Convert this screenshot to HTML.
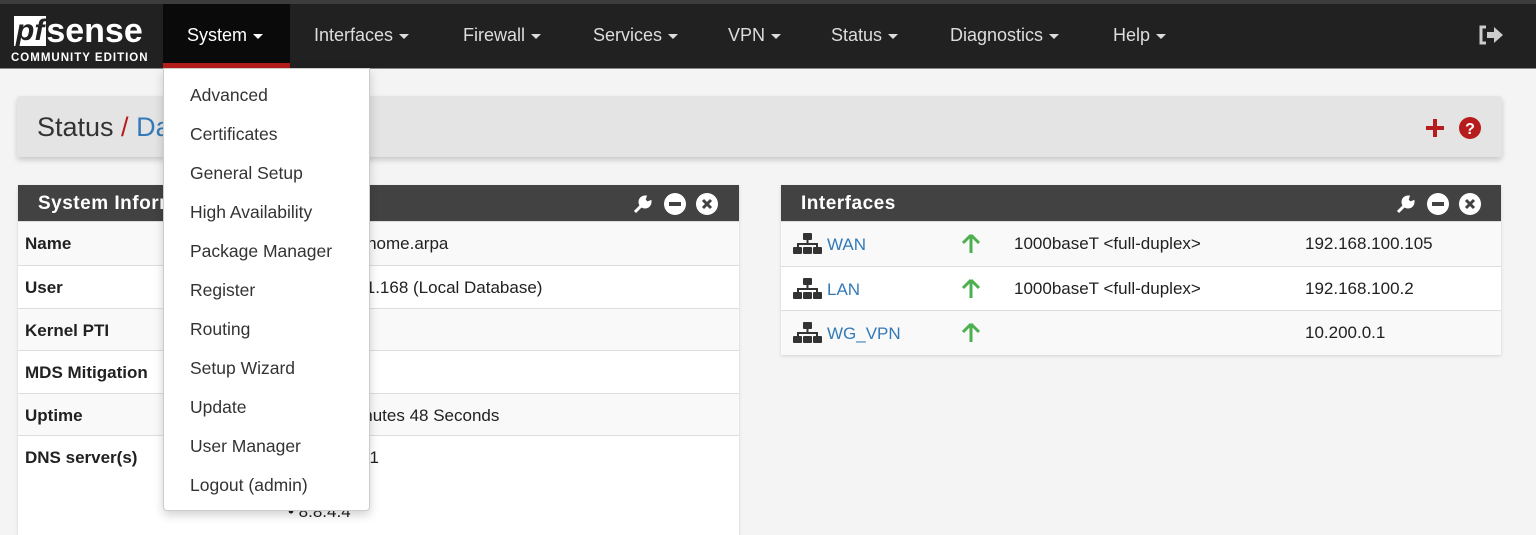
<!DOCTYPE html>
<html><head><style>
*{margin:0;padding:0;box-sizing:border-box}
body{width:1536px;height:527px;overflow:hidden;background:#f4f4f4;font-family:"Liberation Sans",sans-serif;position:relative;color:#212121}
.top{position:absolute;left:0;top:0;width:1536px;height:4px;background:#3c3c3c}
.nav{position:absolute;left:0;top:4px;width:1536px;height:65px;background:#212121;border-bottom:1px solid #888}
.nav .it{position:absolute;top:21px;color:#ddd;font-size:18px}
.car{display:inline-block;width:0;height:0;border-left:5px solid transparent;border-right:5px solid transparent;border-top:5px solid currentColor;vertical-align:middle;margin-left:6px}
.sys{position:absolute;left:163px;top:4px;width:127px;height:64px;background:#0a0a0a;border-bottom:5px solid #b71c1c}
.logo{position:absolute;left:12px;top:12px;color:#fff}
.bc{position:absolute;left:17px;top:96px;width:1485px;height:61px;background:#e4e4e4;border-radius:3px;box-shadow:0 3px 6px rgba(0,0,0,.18)}
.panel{position:absolute;background:#fff;box-shadow:0 1px 3px rgba(0,0,0,.15)}
.ph{height:36px;background:#424242;color:#fff;font-weight:bold;font-size:19px;padding:8px 20px;letter-spacing:.5px;position:relative}
.row{border-top:1px solid #ddd;font-size:17px;position:relative;white-space:nowrap}
.row b{position:absolute;left:7px;top:12px}
.dd{position:absolute;left:163px;top:68px;width:207px;height:443px;background:#fff;border:1px solid #ccc;border-radius:0 0 4px 4px;box-shadow:0 4px 10px rgba(0,0,0,.18)}
.dd div{position:absolute;left:26px;font-size:17.5px;color:#333}
.ic{position:absolute;top:8px}
a{color:#337ab7;text-decoration:none}
</style></head><body>
<div class="top"></div>
<div class="nav">
 <div class="logo"><span style="display:inline-block;background:#fff;color:#212121;font-style:italic;font-weight:bold;font-size:30px;padding:0 2px;line-height:30px;margin-left:2px;vertical-align:top">pf</span><span style="font-weight:bold;font-size:34px;line-height:30px;vertical-align:top">sense</span><div style="font-size:11.5px;font-weight:bold;letter-spacing:1px;margin-top:6px;margin-left:-1px">COMMUNITY EDITION</div></div>
</div>
<div class="sys"></div>
<div class="nav" style="background:none;border:none">
 <div class="it" style="left:187px;color:#fff">System<span class="car"></span></div>
 <div class="it" style="left:314px">Interfaces<span class="car"></span></div>
 <div class="it" style="left:463px">Firewall<span class="car"></span></div>
 <div class="it" style="left:593px">Services<span class="car"></span></div>
 <div class="it" style="left:728px">VPN<span class="car"></span></div>
 <div class="it" style="left:831px">Status<span class="car"></span></div>
 <div class="it" style="left:950px">Diagnostics<span class="car"></span></div>
 <div class="it" style="left:1113px">Help<span class="car"></span></div>
 <svg style="position:absolute;left:1478px;top:21px" width="26" height="20" viewBox="0 0 26 20"><path d="M8 2H3v16h5" fill="none" stroke="#ccc" stroke-width="3"/><path d="M9 7h7V2l9 8-9 8v-5H9z" fill="#ccc"/></svg>
</div>
<div class="bc"><div style="position:absolute;left:20px;top:16px;font-size:27px;color:#333">Status <span style="color:#b71c1c">/</span> <span style="color:#337ab7">Dashboard</span></div>
<svg style="position:absolute;left:1408px;top:22px" width="20" height="20"><path d="M10 1v18M1 10h18" stroke="#b71c1c" stroke-width="4"/></svg>
<svg style="position:absolute;left:1441px;top:20px" width="24" height="24"><circle cx="12" cy="12" r="11" fill="#b71c1c"/><text x="12" y="18" font-size="16" font-weight="bold" fill="#fff" text-anchor="middle" font-family="Liberation Sans">?</text></svg>
</div>

<div class="panel" style="left:18px;top:185px;width:721px;height:350px">
 <div class="ph">System Information
  <svg class="ic" style="left:614px" width="22" height="22" viewBox="0 0 22 22"><path d="M3 19L12 10M13 4a5 5 0 1 0 5 5l-3 1-3-3z" stroke="#fff" stroke-width="3" fill="#fff"/></svg>
  <svg class="ic" style="left:646px" width="22" height="22"><circle cx="11" cy="11" r="11" fill="#fff"/><rect x="5" y="9" width="12" height="4" fill="#424242"/></svg>
  <svg class="ic" style="left:678px" width="22" height="22"><circle cx="11" cy="11" r="11" fill="#fff"/><path d="M7 7l8 8M15 7l-8 8" stroke="#424242" stroke-width="3"/></svg>
 </div>
 <div class="row" style="height:44px;background:#f9f9f9"><b>Name</b><span style="position:absolute;left:282px;top:12px">pfSense.home.arpa</span></div>
 <div class="row" style="height:43px"><b>User</b><span style="position:absolute;left:218px;top:12px">admin@192.168.1.168 (Local Database)</span></div>
 <div class="row" style="height:42px;background:#f9f9f9"><b>Kernel PTI</b></div>
 <div class="row" style="height:43px"><b>MDS Mitigation</b></div>
 <div class="row" style="height:42px;background:#f9f9f9"><b>Uptime</b><span style="position:absolute;left:230px;top:12px">00 Hours 05 Minutes 48 Seconds</span></div>
 <div class="row" style="height:100px"><b>DNS server(s)</b><span style="position:absolute;left:290px;top:12px">127.0.0.1</span><span style="position:absolute;left:270px;top:66px">• 8.8.4.4</span></div>
</div>

<div class="panel" style="left:781px;top:185px;width:720px;height:170px">
 <div class="ph">Interfaces
  <svg class="ic" style="left:614px" width="22" height="22" viewBox="0 0 22 22"><path d="M3 19L12 10M13 4a5 5 0 1 0 5 5l-3 1-3-3z" stroke="#fff" stroke-width="3" fill="#fff"/></svg>
  <svg class="ic" style="left:646px" width="22" height="22"><circle cx="11" cy="11" r="11" fill="#fff"/><rect x="5" y="9" width="12" height="4" fill="#424242"/></svg>
  <svg class="ic" style="left:678px" width="22" height="22"><circle cx="11" cy="11" r="11" fill="#fff"/><path d="M7 7l8 8M15 7l-8 8" stroke="#424242" stroke-width="3"/></svg>
 </div>
 <div class="row" style="height:45px;background:#f9f9f9"></div>
 <div class="row" style="height:44px"></div>
 <div class="row" style="height:45px;background:#f9f9f9"></div>
</div>
<svg width="0" height="0" style="position:absolute"><defs><g id="net"><rect x="10" y="0" width="9" height="7" rx="1"/><path d="M14.5 7v4M5 14v-3h19v3" stroke="#333" stroke-width="2" fill="none"/><rect x="0" y="14" width="9" height="7" rx="1"/><rect x="10" y="14" width="9" height="7" rx="1"/><rect x="20" y="14" width="9" height="7" rx="1"/></g><g id="up"><path d="M10 2L2 10M10 2l8 8M10 2v18" stroke="#4caf50" stroke-width="3" fill="none"/></g></defs></svg>
<div style="position:absolute;left:793px;top:233px;font-size:17px">
 <svg style="position:absolute;left:0;top:0" width="30" height="22" fill="#333"><use href="#net"/></svg><a style="position:absolute;left:34px;top:2px">WAN</a>
 <svg style="position:absolute;left:168px;top:0" width="20" height="22"><use href="#up"/></svg>
 <span style="position:absolute;left:221px;top:1px;white-space:nowrap">1000baseT &lt;full-duplex&gt;</span><span style="position:absolute;left:512px;top:1px">192.168.100.105</span>
</div>
<div style="position:absolute;left:793px;top:278px;font-size:17px">
 <svg style="position:absolute;left:0;top:0" width="30" height="22" fill="#333"><use href="#net"/></svg><a style="position:absolute;left:34px;top:2px">LAN</a>
 <svg style="position:absolute;left:168px;top:0" width="20" height="22"><use href="#up"/></svg>
 <span style="position:absolute;left:221px;top:1px;white-space:nowrap">1000baseT &lt;full-duplex&gt;</span><span style="position:absolute;left:512px;top:1px">192.168.100.2</span>
</div>
<div style="position:absolute;left:793px;top:322px;font-size:17px">
 <svg style="position:absolute;left:0;top:0" width="30" height="22" fill="#333"><use href="#net"/></svg><a style="position:absolute;left:34px;top:2px">WG_VPN</a>
 <svg style="position:absolute;left:168px;top:0" width="20" height="22"><use href="#up"/></svg>
 <span style="position:absolute;left:512px;top:1px">10.200.0.1</span>
</div>

<div class="dd">
 <div style="top:16px">Advanced</div>
 <div style="top:55px">Certificates</div>
 <div style="top:94px">General Setup</div>
 <div style="top:133px">High Availability</div>
 <div style="top:172px">Package Manager</div>
 <div style="top:211px">Register</div>
 <div style="top:250px">Routing</div>
 <div style="top:289px">Setup Wizard</div>
 <div style="top:328px">Update</div>
 <div style="top:367px">User Manager</div>
 <div style="top:406px">Logout (admin)</div>
</div>
</body></html>
